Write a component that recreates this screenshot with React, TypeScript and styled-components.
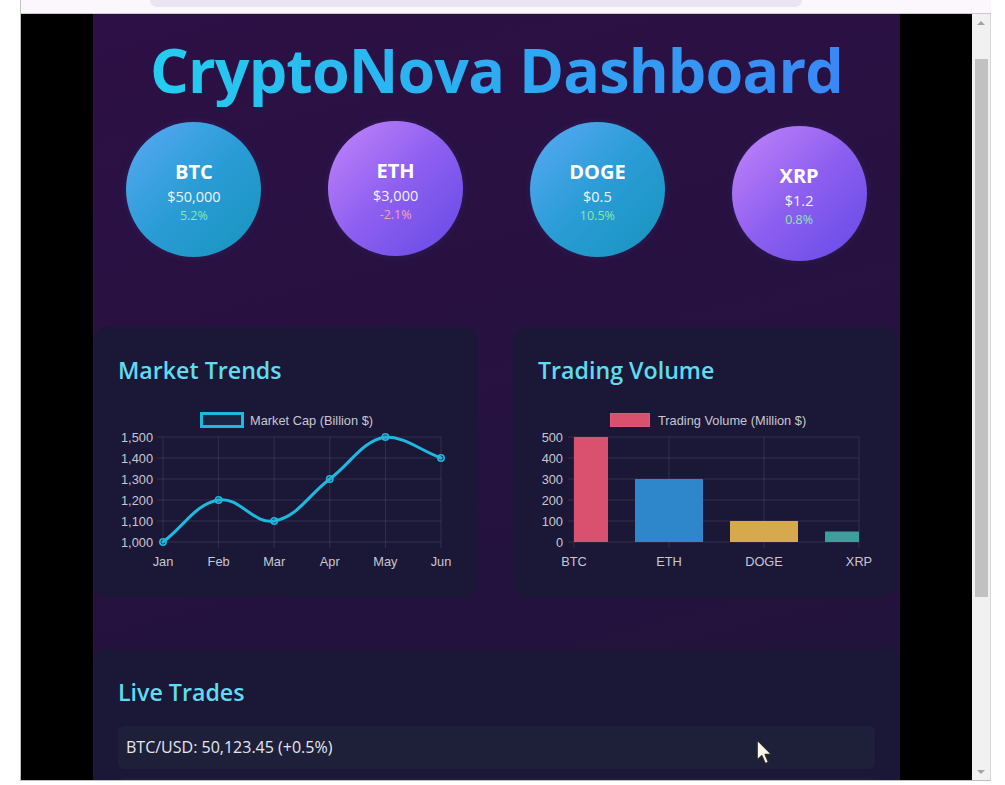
import React from 'react';
import styled, { createGlobalStyle } from 'styled-components';

const GlobalStyle = createGlobalStyle`
  html, body {
    margin: 0;
    padding: 0;
    background: #ffffff;
    overflow: hidden;
  }
  * {
    box-sizing: border-box;
  }
`;

const UI_FONT = `"Open Sans", "Noto Sans", "Liberation Sans", sans-serif`;
const CHART_FONT = `"Liberation Sans", Arial, sans-serif`;

interface Coin {
  symbol: string;
  price: string;
  change: number;
  tone: 'blue' | 'purple';
  drift: number;
}

const coins: Coin[] = [
  { symbol: 'BTC', price: '$50,000', change: 5.2, tone: 'blue', drift: 0 },
  { symbol: 'ETH', price: '$3,000', change: -2.1, tone: 'purple', drift: -1 },
  { symbol: 'DOGE', price: '$0.5', change: 10.5, tone: 'blue', drift: 0 },
  { symbol: 'XRP', price: '$1.2', change: 0.8, tone: 'purple', drift: 4 },
];

// only the first row is in view; the next one is just peeking in under it
const trades = ['BTC/USD: 50,123.45 (+0.5%)'];

const marketCap = [1000, 1200, 1100, 1300, 1500, 1400];
const months = ['Jan', 'Feb', 'Mar', 'Apr', 'May', 'Jun'];

const volumes = [
  { label: 'BTC', value: 500, color: '#d9516f' },
  { label: 'ETH', value: 300, color: '#2f87cb' },
  { label: 'DOGE', value: 100, color: '#d6aa4c' },
  { label: 'XRP', value: 50, color: '#3f9d9e' },
];

/* ---------- browser chrome ---------- */

const Screen = styled.div`
  width: 1005px;
  height: 785px;
  display: flex;
  flex-direction: column;
  position: relative;
  background: #ffffff;
`;

const TopBar = styled.div`
  margin-left: 20px;
  width: 971px;
  height: 14px;
  background: #fcf6fd;
  border-left: 1px solid #c9c3cc;
  border-bottom: 1px solid #cdc6d1;
  padding-left: 129px;
`;

const AddressPill = styled.div`
  width: 652px;
  height: 7px;
  background: #ebe5f1;
  border-radius: 0 0 9px 9px;
`;

const ViewportRow = styled.div`
  margin-left: 20px;
  width: 971px;
  height: 767px;
  display: flex;
  border-left: 1px solid #b9b9b9;
  border-right: 1px solid #d6d6d6;
  border-bottom: 1px solid #bdbdbd;
`;

const Viewport = styled.div`
  flex: 1;
  background: #000000;
  overflow: hidden;
`;

const Scrollbar = styled.div`
  width: 18px;
  background: #f1f1f1;
  display: flex;
  flex-direction: column;
  align-items: center;
`;

const ScrollArrow = styled.div<{ $down?: boolean }>`
  height: 17px;
  width: 100%;
  display: flex;
  align-items: center;
  justify-content: center;

  &::after {
    content: '';
    width: 0;
    height: 0;
    border-left: 4px solid transparent;
    border-right: 4px solid transparent;
    ${(p) => (p.$down ? 'border-top: 4px solid #a3a3a3;' : 'border-bottom: 4px solid #a3a3a3;')}
  }
`;

const Thumb = styled.div`
  margin-top: 28px;
  width: 13px;
  height: 538px;
  background: #c1c1c1;
`;

const Spacer = styled.div`
  flex: 1;
`;

const Cursor = styled.svg`
  position: absolute;
  left: 756px;
  top: 739px;
`;

/* ---------- page ---------- */

const Page = styled.div`
  width: 807px;
  margin: 0 auto;
  padding: 19px 0 40px;
  background: linear-gradient(165deg, #2d1045 0%, #25123f 55%, #1f1439 100%);
  font-family: ${UI_FONT};
  color: #ffffff;
`;

const Title = styled.h1`
  margin: 0;
  text-align: center;
  font-size: 61px;
  font-weight: 700;
  line-height: 1.22;
  letter-spacing: -0.9px;
  background: linear-gradient(90deg, #22d3ee 0%, #3b82f6 100%);
  -webkit-background-clip: text;
  background-clip: text;
  color: transparent;
`;

const CoinRow = styled.div`
  margin-top: 15px;
  display: grid;
  grid-template-columns: repeat(4, 1fr);
`;

const CoinCell = styled.div`
  display: flex;
  justify-content: center;
`;

const CoinBubble = styled.div<{ $tone: 'blue' | 'purple'; $drift: number }>`
  width: 135px;
  height: 135px;
  border-radius: 50%;
  transform: translateY(${(p) => p.$drift}px);
  background: ${(p) =>
    p.$tone === 'blue'
      ? 'linear-gradient(135deg, #5aaaf4 0%, #2a9cd6 50%, #1794bd 100%)'
      : 'linear-gradient(135deg, #c485fb 0%, #8d5ff0 50%, #6549e6 100%)'};
  box-shadow: 0 0 8px rgba(80, 140, 255, 0.1);
  display: flex;
  flex-direction: column;
  align-items: center;
  justify-content: center;
  padding-top: 5px;
`;

const CoinSymbol = styled.div`
  font-size: 20px;
  font-weight: 700;
  line-height: 24px;
  margin-bottom: 3px;
`;

const CoinPrice = styled.div`
  font-size: 14.5px;
  line-height: 20px;
  color: #eef3ff;
`;

const CoinChange = styled.div<{ $up: boolean }>`
  font-size: 12.5px;
  line-height: 18px;
  color: ${(p) => (p.$up ? '#86e9b0' : '#f7a3b4')};
`;

const ChartGrid = styled.div`
  margin-top: 70px;
  display: grid;
  grid-template-columns: 385px 385px;
  column-gap: 35px;
`;

const Card = styled.section`
  background: #1b1736;
  border-radius: 16px;
  padding: 25px 25px 22px;
`;

const CardTitle = styled.h2`
  margin: 0;
  font-size: 23.2px;
  font-weight: 600;
  line-height: 36px;
  color: #5fdcef;
`;

const ChartBox = styled.svg`
  display: block;
  margin-top: 17px;
  overflow: visible;
`;

const TradesCard = styled(Card)`
  margin-top: 52px;
`;

const TradeList = styled.div`
  margin-top: 16px;
  display: flex;
  flex-direction: column;
  gap: 9px;
`;

const TradeRow = styled.div`
  background: #1e2039;
  border-radius: 6px;
  padding: 12px 8px;
  min-height: 43px;
  font-size: 16px;
  line-height: 19px;
  color: #e6e6ee;
`;

/* ---------- charts ---------- */

const GRID = 'rgba(255,255,255,0.1)';
const TICK = '#c8c7d2';
const TICK_SIZE = 12.8;

type Pt = { x: number; y: number };

// same curve chart.js draws for tension 0.4, control points kept inside the plot
function linePath(points: Pt[], top: number, bottom: number, tension = 0.4) {
  const clamp = (v: number) => Math.max(top, Math.min(bottom, v));
  const cps = points.map((cur, i) => {
    const prev = points[i - 1] || cur;
    const next = points[i + 1] || cur;
    const d01 = Math.hypot(cur.x - prev.x, cur.y - prev.y);
    const d12 = Math.hypot(next.x - cur.x, next.y - cur.y);
    const sum = d01 + d12 || 1;
    const fa = (tension * d01) / sum;
    const fb = (tension * d12) / sum;
    return {
      prev: { x: cur.x - fa * (next.x - prev.x), y: clamp(cur.y - fa * (next.y - prev.y)) },
      next: { x: cur.x + fb * (next.x - prev.x), y: clamp(cur.y + fb * (next.y - prev.y)) },
    };
  });
  let d = `M${points[0].x},${points[0].y}`;
  for (let i = 1; i < points.length; i++) {
    const a = cps[i - 1].next;
    const b = cps[i].prev;
    d += ` C${a.x},${a.y} ${b.x},${b.y} ${points[i].x},${points[i].y}`;
  }
  return d;
}

const MarketTrendsChart: React.FC = () => {
  const left = 45;
  const right = 323;
  const top = 32;
  const bottom = 137;
  const step = (right - left) / (months.length - 1);
  const yTicks = [1500, 1400, 1300, 1200, 1100, 1000];
  const toY = (v: number) => bottom - ((v - 1000) / 500) * (bottom - top);
  const pts = marketCap.map((v, i) => ({ x: left + i * step, y: toY(v) }));

  return (
    <ChartBox width={335} height={170} viewBox="0 0 335 170" fontFamily={CHART_FONT} fontSize={TICK_SIZE}>
      <rect x={83.5} y={8.5} width={41} height={13} fill="rgba(34,190,230,0.08)" stroke="#1fb8df" strokeWidth={3} />
      <text x={132} y={19.5} fill={TICK}>Market Cap (Billion $)</text>
      {yTicks.map((v) => (
        <g key={v}>
          <line x1={left - 6} x2={right} y1={toY(v)} y2={toY(v)} stroke={GRID} />
          <text x={35} y={toY(v) + 4.5} fill={TICK} textAnchor="end">{v.toLocaleString('en-US')}</text>
        </g>
      ))}
      {months.map((m, i) => (
        <g key={m}>
          <line x1={left + i * step} x2={left + i * step} y1={top} y2={bottom + 6} stroke={GRID} />
          <text x={left + i * step} y={160.5} fill={TICK} textAnchor="middle">{m}</text>
        </g>
      ))}
      <path d={linePath(pts, top, bottom)} fill="none" stroke="#1fb8df" strokeWidth={3} strokeLinecap="round" />
      {pts.map((p, i) => (
        <circle key={i} cx={p.x} cy={p.y} r={3.2} fill="rgba(31,184,223,0.15)" stroke="#1fb8df" strokeWidth={1.5} />
      ))}
    </ChartBox>
  );
};

const TradingVolumeChart: React.FC = () => {
  const left = 36;
  const right = 321;
  const top = 32;
  const bottom = 137;
  const step = (right - left) / (volumes.length - 1);
  const yTicks = [500, 400, 300, 200, 100, 0];
  const toY = (v: number) => bottom - (v / 500) * (bottom - top);
  const barW = 68;

  return (
    <ChartBox width={335} height={170} viewBox="0 0 335 170" fontFamily={CHART_FONT} fontSize={TICK_SIZE}>
      <defs>
        <clipPath id="plotArea">
          <rect x={left} y={top - 2} width={right - left} height={bottom - top + 4} />
        </clipPath>
      </defs>
      <rect x={72.5} y={8.5} width={39} height={13} fill="#d9516f" stroke="#e05a78" />
      <text x={120} y={19.5} fill={TICK}>Trading Volume (Million $)</text>
      {yTicks.map((v) => (
        <g key={v}>
          <line x1={left - 6} x2={right} y1={toY(v)} y2={toY(v)} stroke={GRID} />
          <text x={25} y={toY(v) + 4.5} fill={TICK} textAnchor="end">{v}</text>
        </g>
      ))}
      {volumes.map((b, i) => (
        <g key={b.label}>
          <line x1={left + i * step} x2={left + i * step} y1={top} y2={bottom + 6} stroke={GRID} />
          <text x={left + i * step} y={160.5} fill={TICK} textAnchor="middle">{b.label}</text>
        </g>
      ))}
      <g clipPath="url(#plotArea)">
        {volumes.map((b, i) => (
          <rect
            key={b.label}
            x={left + i * step - barW / 2}
            y={toY(b.value)}
            width={barW}
            height={bottom - toY(b.value)}
            fill={b.color}
          />
        ))}
      </g>
    </ChartBox>
  );
};

/* ---------- app ---------- */

const App: React.FC = () => {
  return (
    <>
      <GlobalStyle />
      <Screen>
        <TopBar>
          <AddressPill />
        </TopBar>
        <ViewportRow>
          <Viewport>
            <Page>
              <Title>CryptoNova Dashboard</Title>

              <CoinRow>
                {coins.map((c) => (
                  <CoinCell key={c.symbol}>
                    <CoinBubble $tone={c.tone} $drift={c.drift}>
                      <CoinSymbol>{c.symbol}</CoinSymbol>
                      <CoinPrice>{c.price}</CoinPrice>
                      <CoinChange $up={c.change >= 0}>{c.change}%</CoinChange>
                    </CoinBubble>
                  </CoinCell>
                ))}
              </CoinRow>

              <ChartGrid>
                <Card>
                  <CardTitle>Market Trends</CardTitle>
                  <MarketTrendsChart />
                </Card>
                <Card>
                  <CardTitle>Trading Volume</CardTitle>
                  <TradingVolumeChart />
                </Card>
              </ChartGrid>

              <TradesCard>
                <CardTitle>Live Trades</CardTitle>
                <TradeList>
                  {trades.map((t) => (
                    <TradeRow key={t}>{t}</TradeRow>
                  ))}
                  <TradeRow />
                </TradeList>
              </TradesCard>
            </Page>
          </Viewport>
          <Scrollbar>
            <ScrollArrow />
            <Thumb />
            <Spacer />
            <ScrollArrow $down />
          </Scrollbar>
        </ViewportRow>
        <Cursor width="17" height="27" viewBox="0 0 17 27">
          <path d="M1.2 1.2 L1.2 21 L5.8 16.6 L9.2 24.6 L12.4 23.2 L9.1 15.4 L15.4 15.4 Z" fill="#fbf6e8" stroke="#2a2a2a" strokeWidth="1.2" strokeLinejoin="round" />
        </Cursor>
      </Screen>
    </>
  );
};

export default App;
